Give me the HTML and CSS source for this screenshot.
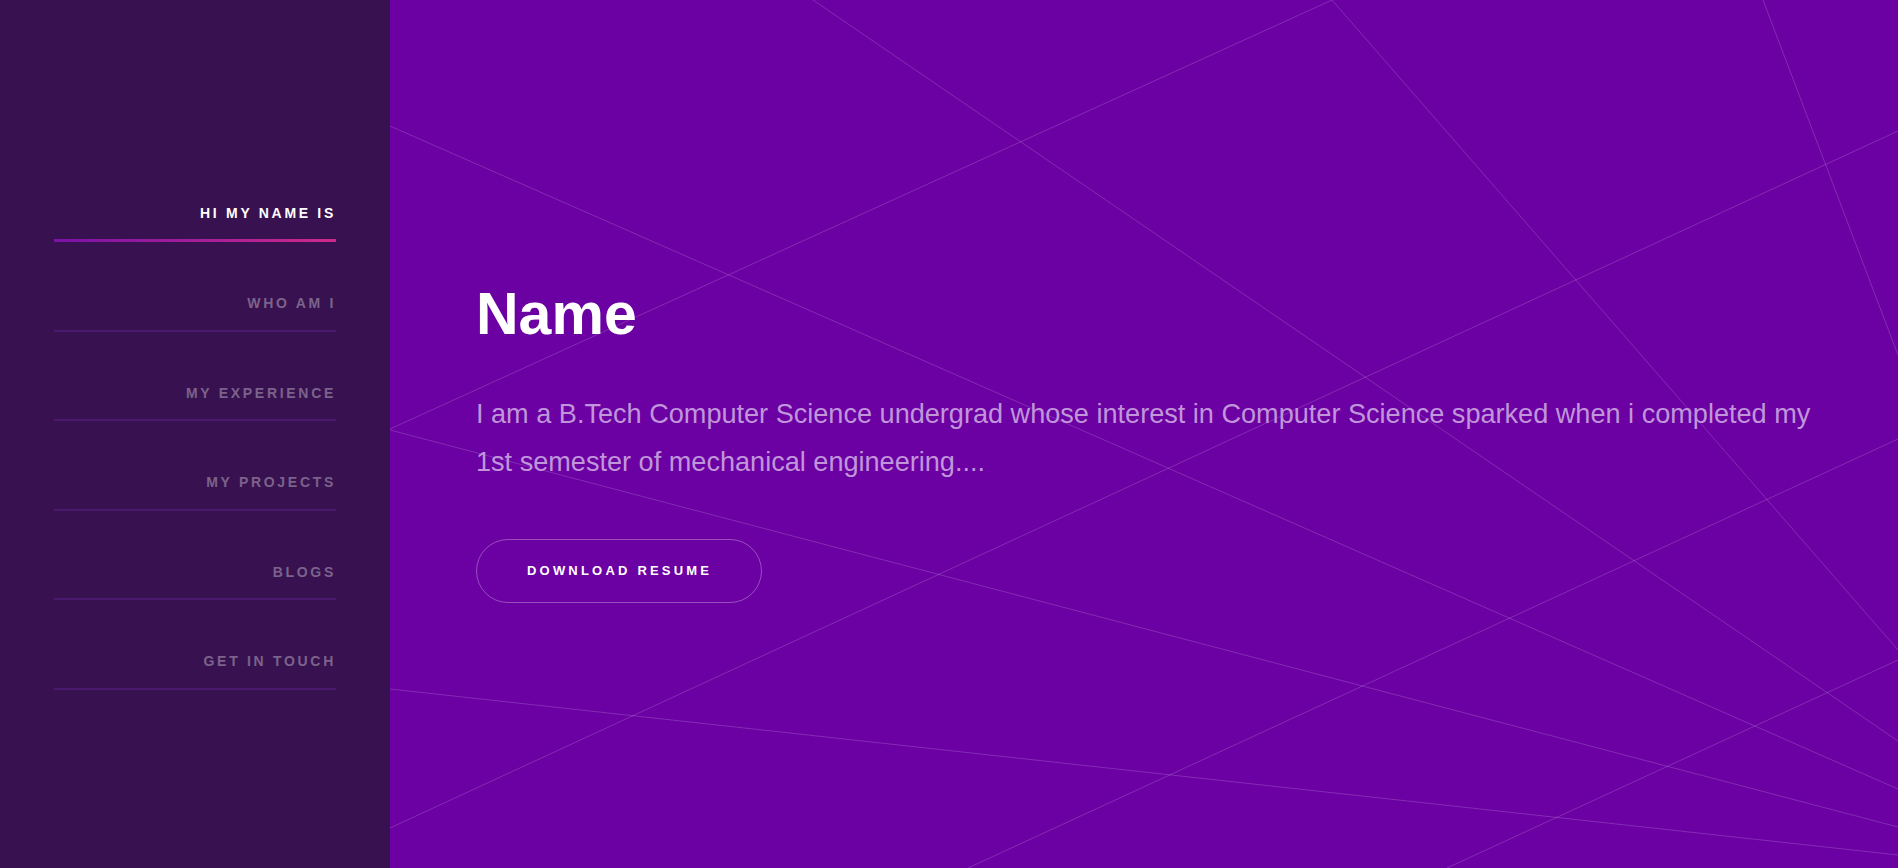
FILE: index.html
```html
<!DOCTYPE html>
<html lang="en">
<head>
<meta charset="utf-8">
<title>Portfolio</title>
<link rel="stylesheet" href="styles.css">
</head>
<body>
<div class="page">
  <aside class="sidebar">
    <nav class="nav">
      <a class="nav-item active" href="#">HI MY NAME IS</a>
      <a class="nav-item" href="#">WHO AM I</a>
      <a class="nav-item" href="#">MY EXPERIENCE</a>
      <a class="nav-item" href="#">MY PROJECTS</a>
      <a class="nav-item" href="#">BLOGS</a>
      <a class="nav-item" href="#">GET IN TOUCH</a>
    </nav>
  </aside>
  <main class="main">
    <svg class="bg-lines" width="1508" height="868" viewBox="0 0 1508 868" preserveAspectRatio="none" aria-hidden="true">
      <line x1="423" y1="0" x2="1508" y2="741"/>
      <line x1="942" y1="0" x2="0" y2="429"/>
      <line x1="942" y1="0" x2="1508" y2="650"/>
      <line x1="1373" y1="0" x2="1508" y2="355"/>
      <line x1="0" y1="126" x2="1508" y2="789"/>
      <line x1="0" y1="430" x2="1508" y2="827"/>
      <line x1="1508" y1="131" x2="0" y2="828"/>
      <line x1="1508" y1="439" x2="578" y2="868"/>
      <line x1="1508" y1="660" x2="1057" y2="868"/>
      <line x1="0" y1="689" x2="1508" y2="855"/>
    </svg>
    <section class="hero">
      <h1 class="title">Name</h1>
      <p class="intro">I am a B.Tech Computer Science undergrad whose interest in Computer Science sparked when i completed my 1st semester of mechanical engineering....</p>
      <a class="btn" href="#">DOWNLOAD RESUME</a>
    </section>
  </main>
</div>
</body>
</html>
```

FILE: styles.css
```css
* {
  box-sizing: border-box;
}

html, body {
  margin: 0;
  padding: 0;
  height: 100%;
  overflow: hidden;
}

body {
  font-family: "Liberation Sans", Arial, sans-serif;
  background: #6b00a3;
}

.page {
  display: flex;
  height: 868px;
}

.sidebar {
  flex: 0 0 390px;
  background: #381250;
  padding: 202.5px 54px 0;
}

.nav {
  display: flex;
  flex-direction: column;
  gap: 51px;
}

.nav-item {
  display: block;
  text-align: right;
  text-decoration: none;
  font-size: 14px;
  font-weight: 700;
  line-height: 20px;
  letter-spacing: 2.7px;
  color: rgba(255, 255, 255, 0.35);
  padding-bottom: 16.5px;
  border-bottom: 2px solid #4a186d;
}

.nav-item.active {
  color: #ffffff;
  border-bottom: none;
  padding-bottom: 19.5px;
  background-image: linear-gradient(90deg, #7a12a8, #cd2a8a);
  background-size: 100% 3px;
  background-position: left bottom;
  background-repeat: no-repeat;
}

.main {
  flex: 1 1 auto;
  position: relative;
  background: #6b00a3;
  overflow: hidden;
}

.bg-lines {
  position: absolute;
  left: 0;
  top: 0;
  width: 1508px;
  height: 868px;
}

.bg-lines line {
  stroke: rgba(255, 255, 255, 0.17);
  stroke-width: 1;
}

.hero {
  position: relative;
  padding: 280px 60px 0 86px;
}

.title {
  margin: 0;
  font-size: 59px;
  line-height: 69.6px;
  font-weight: 700;
  color: #ffffff;
}

.intro {
  margin: 40px 0 0;
  font-size: 27.1px;
  line-height: 48px;
  color: #c095da;
}

.btn {
  display: inline-flex;
  align-items: center;
  justify-content: center;
  margin-top: 53px;
  height: 64px;
  padding: 0 49px 0 50px;
  border: 1px solid rgba(255, 255, 255, 0.3);
  border-radius: 32px;
  color: #ffffff;
  text-decoration: none;
  font-size: 13px;
  font-weight: 700;
  letter-spacing: 3.2px;
}
```
